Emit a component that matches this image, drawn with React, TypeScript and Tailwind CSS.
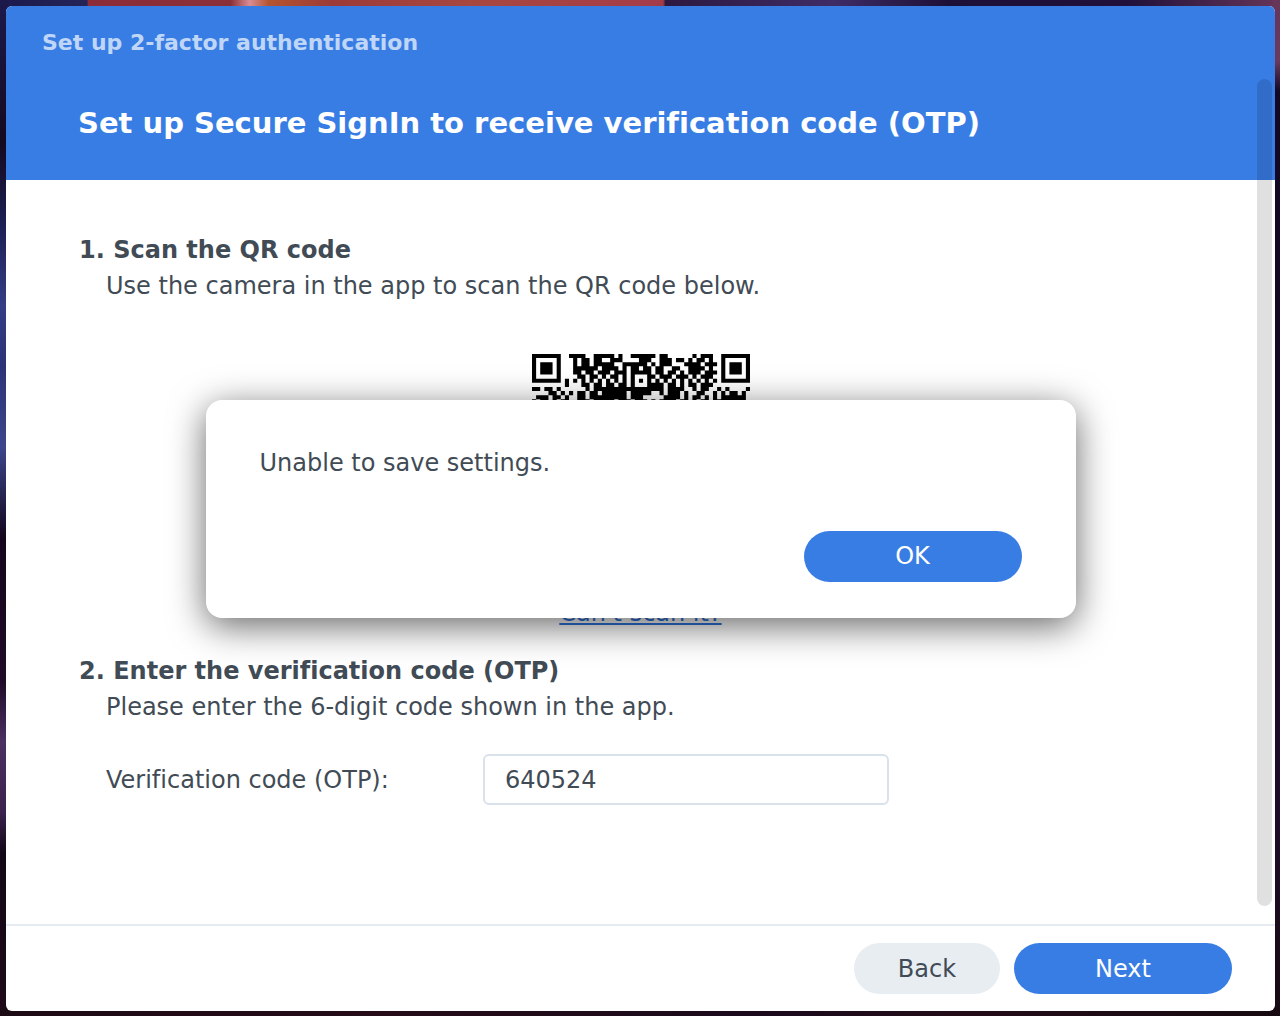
import React from "react";

// top rows of the code, the rest stays behind the dialog
const qrRows = [
  "#######..####..#####.#..######.##......#.###..#######",
  "#.....#...#.##.##..###....###..###.##.#.##.#..#.....#",
  "#.###.#...#.##.#####..######.#.###...####.###.#.###.#",
  "#.###.#...######.####.#.##.##.##..##..####.#..#.###.#",
  "#.###.#...##.##.###.###.#####.##.##.#.###.###.#.###.#",
  "#.....#....##.##.#.##.#.#...##.###.###.#.###..#.....#",
  "#######.#.#.#.#.#.#.#.#.#.#.#.#.#.#.#.#.#.#.#.#######",
  "........#...##.##.##.##.#...####.##.#.##.###.........",
  "##.##.#......#.#################.####..#.##..#.#....#",
  "....##.#.#.##.##.######.#####..#.###.#..##..#.#.##.#.",
  ".###.##.#..##.#########.###.....####.#.##.#.#.######.",
  "#.##.#.##..###.#####.###.###.#.####.##.#.##.########.",
];

// one path for all dark cells, so that neighbours join without a seam
const qrPath = qrRows
  .map((row, y) =>
    [...row.matchAll(/#+/g)]
      .map((run) => `M${run.index} ${y}h${run[0].length}v1h-${run[0].length}z`)
      .join(""),
  )
  .join("");

const QrCode = () => {
  return (
    <svg
      viewBox="0 0 53 53"
      className="w-[218px] h-[218px]"
      role="img"
      aria-label="QR code"
    >
      <path d={qrPath} />
    </svg>
  );
};

const Wallpaper = () => {
  return (
    <div className="absolute inset-0 bg-[#170a1c]">
      <div className="absolute top-0 inset-x-0 h-2 bg-[linear-gradient(to_right,#1c1a4c_0%,#252458_6.8%,#8c2c38_6.9%,#8a2f38_18%,#d98d92_19.5%,#b5542f_21%,#9c3a38_26%,#a84740_37%,#a33c48_51.8%,#2c1840_52%,#3f2c66_65%,#1d1038_74%,#20103a_88%,#663558_100%)]"></div>
      <div className="absolute left-0 inset-y-0 w-2 bg-[linear-gradient(to_bottom,#1c1a4c_0%,#140a20_14%,#1c1f52_22%,#343d85_30%,#2c3276_36%,#3c468c_44%,#15051c_53%,#1f0b28_67%,#4b3060_73%,#3a224c_80%,#120716_84%,#1f0a18_100%)]"></div>
      <div className="absolute right-0 inset-y-0 w-2 bg-[linear-gradient(to_bottom,#663558_0%,#6a3a60_6%,#120824_9%,#160a26_50%,#1f0c2a_80%,#170b12_100%)]"></div>
      <div className="absolute bottom-0 inset-x-0 h-2 bg-[linear-gradient(to_right,#1c0a14,#250c18_30%,#1a0a1c_60%,#230c18_75%,#160a10)]"></div>
    </div>
  );
};

const ErrorDialog = () => {
  return (
    <div className="absolute inset-0 flex items-center justify-center px-8">
      <div
        role="alertdialog"
        aria-labelledby="dialog-text"
        className="w-full max-w-[870px] bg-white rounded-2xl px-[54px] pt-[45px] pb-9 shadow-[0_8px_36px_rgba(0,0,0,0.6)]"
      >
        <p id="dialog-text" className="leading-9">
          Unable to save settings.
        </p>
        <div className="flex justify-end mt-[50px]">
          <button className="w-[218px] h-[51px] rounded-full bg-[#387de4] text-white">
            OK
          </button>
        </div>
      </div>
    </div>
  );
};

const App = () => {
  return (
    <div className="relative min-h-screen flex pl-1.5 pt-1.5 pr-[5px] pb-[5px] text-[24px] text-[#414b55] font-[Verdana,'DejaVu_Sans',sans-serif] [font-variant-ligatures:none]">
      <Wallpaper />
      <div className="relative flex-1 flex flex-col bg-white rounded-md overflow-hidden">
        <header className="h-[174px] bg-[#387de4] px-9 pt-[19px]">
          <p className="text-[22px] leading-9 font-bold text-[#c0d6f7]">
            Set up 2-factor authentication
          </p>
          <h1 className="text-[29px] leading-10 font-bold text-white pl-9 mt-[42px]">
            Set up Secure SignIn to receive verification code (OTP)
          </h1>
        </header>

        <main className="flex-1 pl-[73px] pr-[73px] pt-[52px] leading-9">
          <h2 className="font-bold">1. Scan the QR code</h2>
          <p className="pl-[27px]">
            Use the camera in the app to scan the QR code below.
          </p>
          <div className="flex flex-col items-center mt-[50px]">
            <QrCode />
            <a href="#" className="mt-[23px] text-[#2f74e0] underline">
              Can't scan it?
            </a>
          </div>

          <h2 className="font-bold mt-[22px]">
            2. Enter the verification code (OTP)
          </h2>
          <p className="pl-[27px]">
            Please enter the 6-digit code shown in the app.
          </p>
          <div className="flex items-center pl-[27px] mt-[29px]">
            <label htmlFor="otp" className="w-[377px]">
              Verification code (OTP):
            </label>
            <input
              id="otp"
              type="text"
              defaultValue="640524"
              className="w-[406px] h-[51px] px-5 border-2 border-[#d9e1eb] rounded-md"
            />
          </div>
        </main>

        <footer className="h-[87px] flex items-center justify-end gap-[14px] pr-[43px] border-t-2 border-[#e6ebf1]">
          <button className="w-[146px] h-[51px] rounded-full bg-[#e8edf2]">
            Back
          </button>
          <button className="w-[218px] h-[51px] rounded-full bg-[#387de4] text-white">
            Next
          </button>
        </footer>

        {/* scrollbar */}
        <div className="absolute right-[3px] top-[73px] bottom-[105px] w-[15px] rounded-full bg-black/12"></div>

        <ErrorDialog />
      </div>
    </div>
  );
};

export default App;
